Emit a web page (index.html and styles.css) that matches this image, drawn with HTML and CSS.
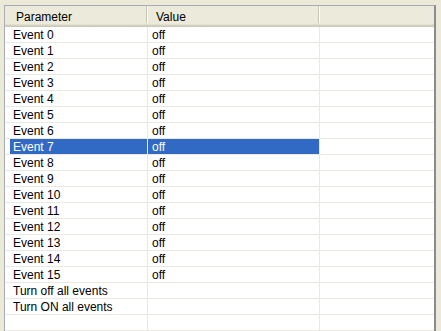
FILE: index.html
```html
<!DOCTYPE html>
<html lang="en">
<head>
  <meta charset="UTF-8" />
  <title>Parameters</title>
  <link rel="stylesheet" href="styles.css">
</head>
<body>
  <div class="list">
    <div class="header">
      <div class="hcell col-param">Parameter</div>
      <div class="hcell col-value">Value</div>
      <div class="hcell col-rest"></div>
    </div>
    <div class="rows" id="rows"></div>
  </div>

  <script>
    // Build the rows
    const rows = document.getElementById('rows');
    const items = [];
    for (let i = 0; i < 16; i++) {
      items.push(['Event ' + i, 'off']);
    }
    items.push(['Turn off all events', '']);
    items.push(['Turn ON all events', '']);
    items.push(['', '']);

    items.forEach((item, i) => {
      const row = document.createElement('div');
      row.className = 'row' + (i === 7 ? ' selected' : '');
      row.innerHTML =
        '<div class="cell col-param"><span>' + item[0] + '</span></div>' +
        '<div class="cell col-value"><span>' + item[1] + '</span></div>' +
        '<div class="cell col-rest"></div>';
      rows.appendChild(row);
    });
  </script>
</body>
</html>
```

FILE: styles.css
```css
body {
  margin: 0;
  background-color: #ece9d8;
  font-family: 'Liberation Sans', Arial, sans-serif;
  font-size: 12px;
  color: #000;
  overflow: hidden;
  height: 331px;
}

.list {
  margin: 5px 0 0 4px;
  width: 429px;
  height: 325px;
  overflow: hidden;
  background: #fff;
  border-top: 1px solid #a5acb5;
  border-left: 1px solid #a5acb5;
  border-right: 2px solid #8c8c8c;
}

.header {
  display: flex;
  height: 21px;
  background: #ebeadb;
  box-shadow: inset 0 -1px #cbc7b8, inset 0 -2px #d6d2c2, inset 0 -3px #e2decd;
}

.hcell {
  line-height: 22px;
  box-sizing: border-box;
}

.header .col-param {
  width: 142px;
  padding-left: 11px;
  border-right: 1px solid #c7c5b2;
  box-shadow: 1px 0 #fff;
  margin-bottom: 4px;
}

.header .col-value {
  width: 171px;
  padding-left: 8px;
  border-right: 1px solid #c7c5b2;
  box-shadow: 1px 0 #fff;
  margin-left: 1px;
  margin-bottom: 4px;
}

.header .col-rest {
  flex: 1;
  margin-right: 2px;
}

.row {
  display: flex;
  height: 15px;
  border-bottom: 1px solid #ebe9df;
}

.cell {
  box-sizing: border-box;
  height: 15px;
  line-height: 16px;
  white-space: nowrap;
}

.row .col-param {
  width: 143px;
  padding-left: 5px;
  border-right: 1px solid #ebe9df;
}

.row .col-param span {
  display: block;
  padding-left: 3px;
}

.row .col-value {
  width: 172px;
  border-right: 1px solid #ebe9df;
}

.row .col-value span {
  display: block;
  padding-left: 4px;
}

.row .col-rest {
  flex: 1;
}

.selected .col-param span,
.selected .col-value span {
  background: #316ac5;
  color: #fff;
  height: 15px;
}
```
